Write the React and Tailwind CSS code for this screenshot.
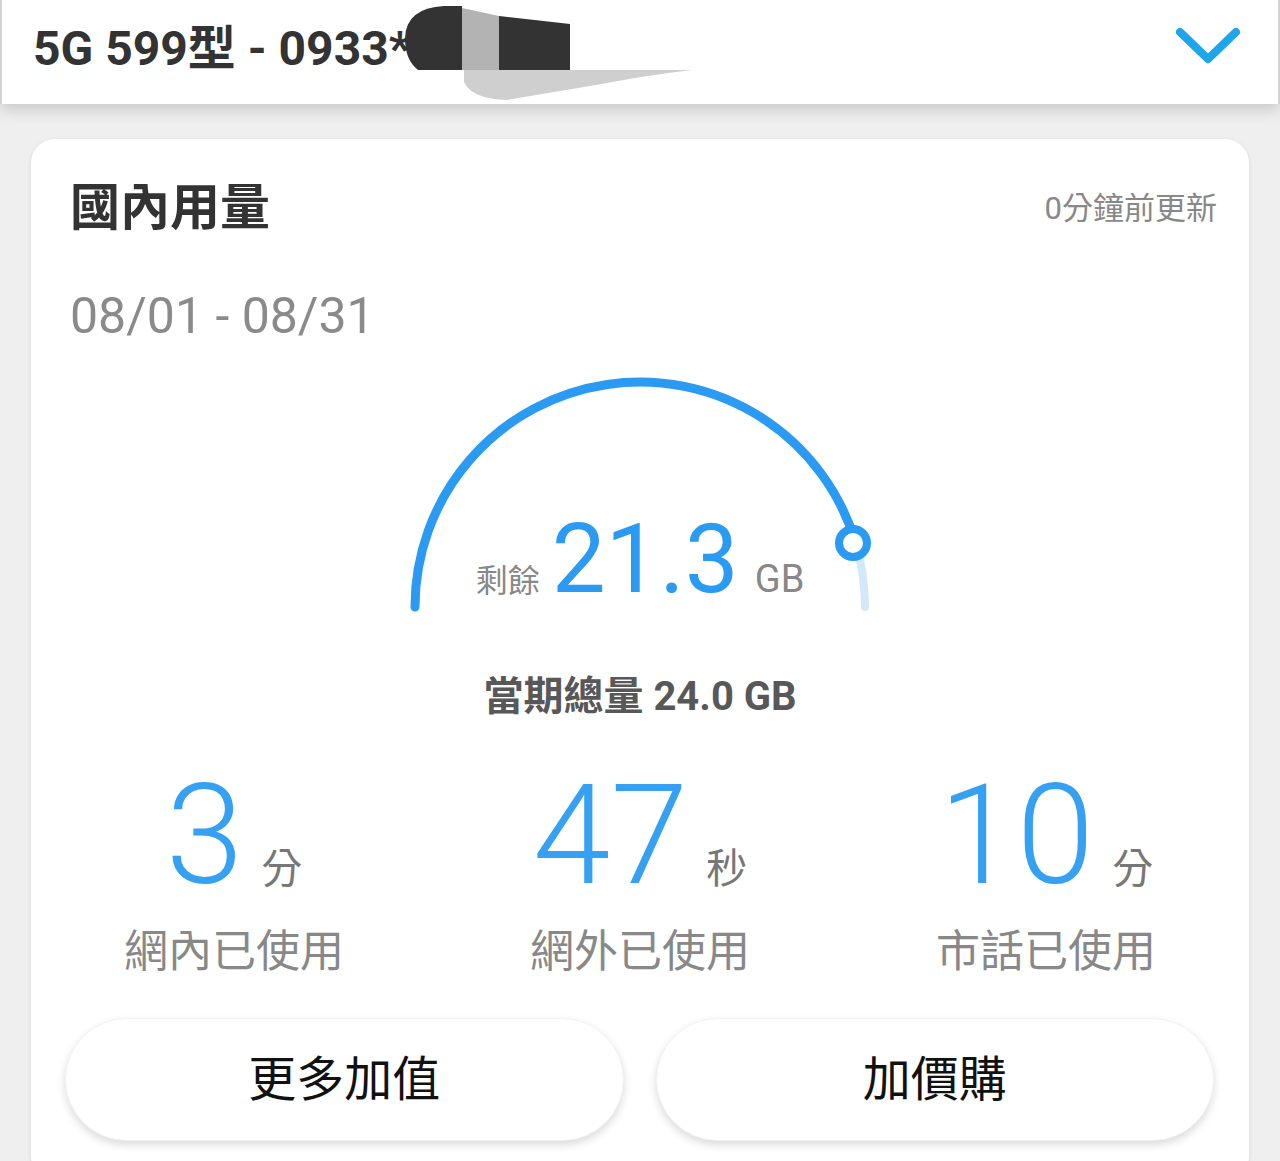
import React from 'react';

const FONT = { fontFamily: "Roboto, 'Noto Sans CJK TC', 'Noto Sans', sans-serif" };

// 頂部門號列
const Header = () => (
    <div className="relative z-10 h-[104px] bg-white border-x-2 border-[#d4d4d4] shadow-[0_6px_14px_rgba(0,0,0,0.16)]">
        <div className="flex items-start justify-between pl-[31px] pr-[36px] pt-[25px]">
            <h1 className="text-[48px] leading-none font-bold text-[#333]">5G 599型 - 0933*</h1>
            <svg width="66" height="40" viewBox="0 0 66 40" className="mt-[1px]">
                <polyline points="4,6 32,33 60,6" fill="none" stroke="#1ea5eb" strokeWidth="8" strokeLinecap="round" strokeLinejoin="round" />
            </svg>
        </div>
        {/* 遮蔽號碼 */}
        <svg className="absolute left-0 top-0" width="700" height="104" viewBox="0 0 700 104">
            <path d="M462 70 L690 70 Q640 76 600 84 L505 100 Q470 99 462 82 Z" fill="#cfcfcf" />
            <path d="M460 6 L442 6 Q404 8 403 38 Q403 60 416 70 L460 70 Z" fill="#333" />
            <path d="M460 8 L497 16 L497 70 L460 70 Z" fill="#b3b3b3" />
            <path d="M497 16 L568 24 L568 70 L497 70 Z" fill="#333" />
        </svg>
    </div>
);

const Gauge = () => (
    <div className="relative h-[250px] w-[480px] mx-auto">
        <svg width="480" height="250" viewBox="0 0 480 250" className="block">
            <path d="M455.4 172 A225 225 0 0 1 465 237" fill="none" stroke="#d3e8fb" strokeWidth="8" strokeLinecap="round" />
            <path d="M15 237 A225 225 0 0 1 455.4 172" fill="none" stroke="#2a9af3" strokeWidth="9" strokeLinecap="round" />
            <circle cx="453" cy="173" r="14" fill="#fff" stroke="#2a9af3" strokeWidth="8" />
        </svg>
        <div className="absolute left-0 right-0 top-[141px] flex items-baseline justify-center leading-none">
            <span className="text-[32px] text-[#888]">剩餘</span>
            <span className="ml-[12px] text-[96px] text-[#2a9af3]">21.3</span>
            <span className="ml-[16px] text-[38px] text-[#888]">GB</span>
        </div>
    </div>
);

const Stat = ({ value, unit, label }) => (
    <div className="flex flex-col items-center">
        <div className="flex items-baseline leading-none">
            <span className="text-[140px] font-light text-[#36a0f2]">{value}</span>
            <span className="ml-[18px] text-[41px] text-[#777]">{unit}</span>
        </div>
        <div className="mt-[25px] text-[44px] leading-none text-[#888]">{label}</div>
    </div>
);

const App = () => {
    return (
        <div className="min-h-screen bg-[#efefef] overflow-hidden" style={FONT}>
            <Header />
            <div className="mx-[31px] mt-[35px] rounded-[24px] bg-white shadow-[0_1px_4px_rgba(0,0,0,0.1)] pt-[44px] pb-10">
                <div className="flex items-center justify-between pl-[39px] pr-[32px]">
                    <h2 className="text-[50px] leading-none font-bold text-[#333]">國內用量</h2>
                    <span className="text-[31px] leading-none text-[#888]">0分鐘前更新</span>
                </div>
                <div className="pl-[39px] mt-[58px] text-[50px] leading-none text-[#8a8a8a]">08/01 - 08/31</div>

                <div className="mt-[29px]">
                    <Gauge />
                </div>

                <div className="mt-[57px] text-center text-[40px] leading-none font-bold text-[#585858]">
                    當期總量 24.0 GB
                </div>

                <div className="mt-[48px] grid grid-cols-3">
                    <Stat value="3" unit="分" label="網內已使用" />
                    <Stat value="47" unit="秒" label="網外已使用" />
                    <Stat value="10" unit="分" label="市話已使用" />
                </div>

                <div className="mt-[44px] grid grid-cols-2 gap-8 pl-[34px] pr-[35px]">
                    <button className="h-[123px] rounded-full bg-white border border-[#f2f2f2] shadow-[0_4px_8px_rgba(0,0,0,0.14)] text-[48px] text-[#111]">
                        更多加值
                    </button>
                    <button className="h-[123px] rounded-full bg-white border border-[#f2f2f2] shadow-[0_4px_8px_rgba(0,0,0,0.14)] text-[48px] text-[#111]">
                        加價購
                    </button>
                </div>
            </div>
        </div>
    );
};

export default App;
